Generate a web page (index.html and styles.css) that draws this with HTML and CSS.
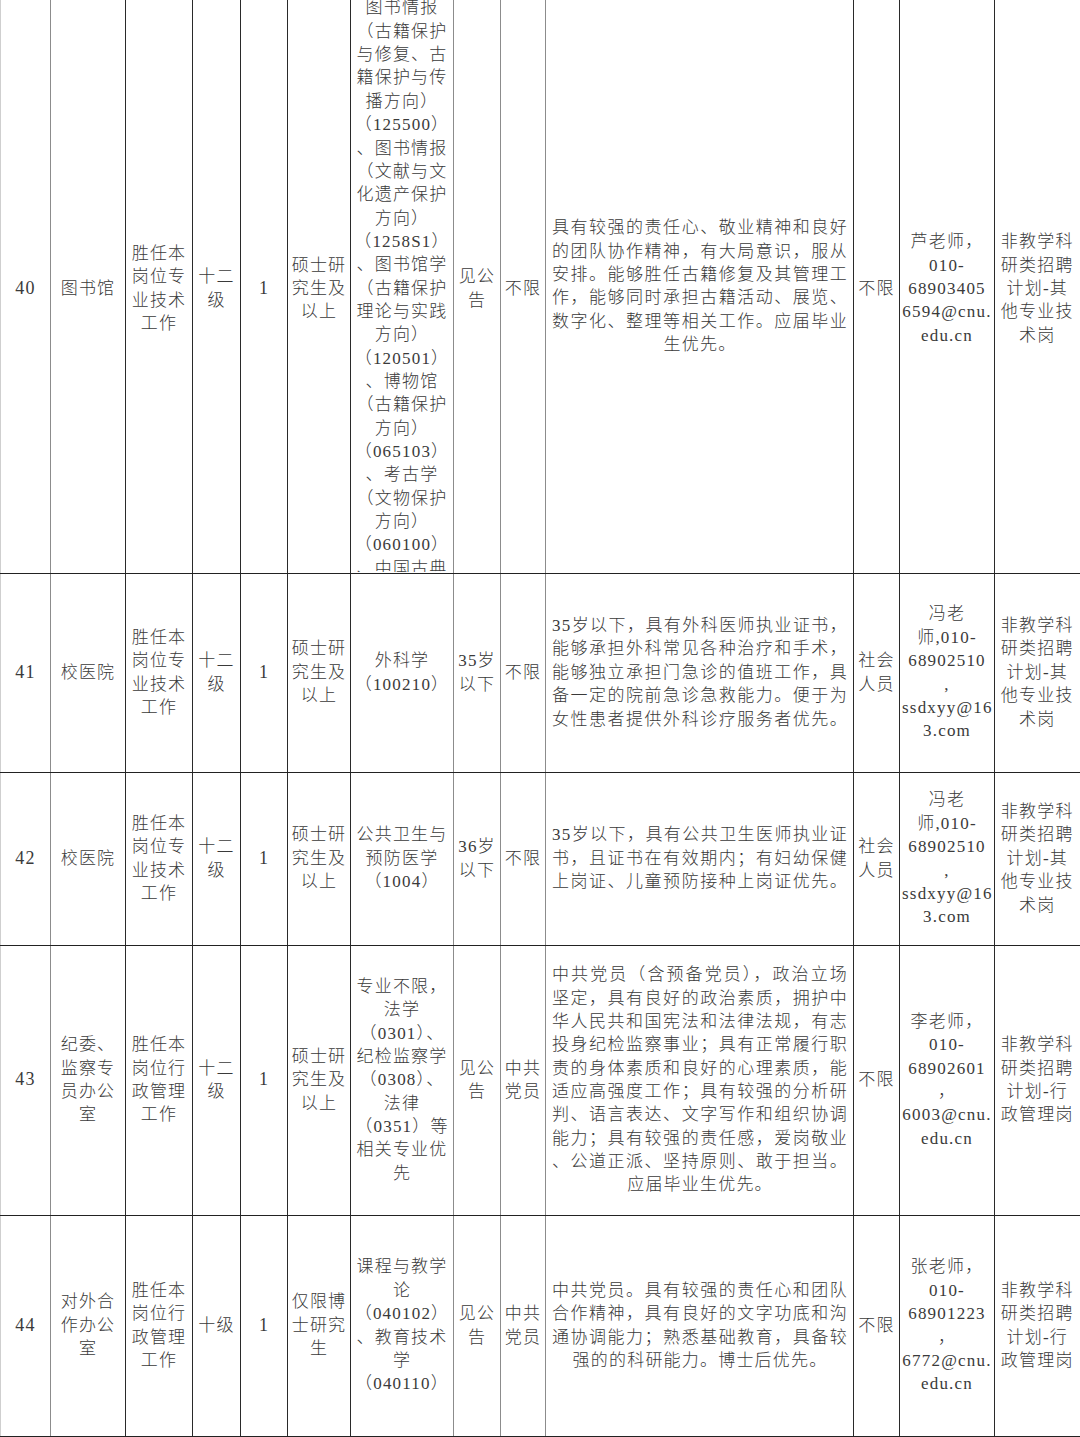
FILE: index.html
```html
<!DOCTYPE html>
<html lang="zh-CN">
<head>
<meta charset="utf-8">
<title>招聘计划</title>
<link rel="stylesheet" href="styles.css">
</head>
<body>
<table class="sheet">
  <colgroup>
    <col class="w-no"><col class="w-dept"><col class="w-post"><col class="w-level"><col class="w-num"><col class="w-edu"><col class="w-major"><col class="w-age"><col class="w-pol"><col class="w-desc"><col class="w-other"><col class="w-contact"><col class="w-type">
  </colgroup>
  <tbody>
    <tr class="r40">
      <td class="no">40</td>
      <td class="dept">图书馆</td>
      <td class="post">胜任本<br>岗位专<br>业技术<br>工作</td>
      <td class="level">十二<br>级</td>
      <td class="num">1</td>
      <td class="edu">硕士研<br>究生及<br>以上</td>
      <td class="major"><div class="clip"><div>图书情报<br>（古籍保护<br>与修复、古<br>籍保护与传<br>播方向）<br>（125500）<br>、图书情报<br>（文献与文<br>化遗产保护<br>方向）<br>（1258S1）<br>、图书馆学<br>（古籍保护<br>理论与实践<br>方向）<br>（120501）<br>、博物馆<br>（古籍保护<br>方向）<br>（065103）<br>、考古学<br>（文物保护<br>方向）<br>（060100）<br>、中国古典</div></div></td>
      <td class="age">见公<br>告</td>
      <td class="pol">不限</td>
      <td class="desc"><div class="just">具有较强的责任心、敬业精神和良好<br>的团队协作精神，有大局意识，服从<br>安排。能够胜任古籍修复及其管理工<br>作，能够同时承担古籍活动、展览、<br>数字化、整理等相关工作。应届毕业</div><div class="tail">生优先。</div></td>
      <td class="other">不限</td>
      <td class="contact">芦老师，<br>010-<br>68903405<br>6594@cnu.<br>edu.cn</td>
      <td class="type">非教学科<br>研类招聘<br>计划-其<br>他专业技<br>术岗</td>
    </tr>
    <tr class="r41">
      <td class="no">41</td>
      <td class="dept">校医院</td>
      <td class="post">胜任本<br>岗位专<br>业技术<br>工作</td>
      <td class="level">十二<br>级</td>
      <td class="num">1</td>
      <td class="edu">硕士研<br>究生及<br>以上</td>
      <td class="major">外科学<br>（100210）</td>
      <td class="age">35岁<br>以下</td>
      <td class="pol">不限</td>
      <td class="desc"><div class="just">35岁以下，具有外科医师执业证书，<br>能够承担外科常见各种治疗和手术，<br>能够独立承担门急诊的值班工作，具<br>备一定的院前急诊急救能力。便于为<br>女性患者提供外科诊疗服务者优先。</div></td>
      <td class="other">社会<br>人员</td>
      <td class="contact">冯老<br>师,010-<br>68902510<br>,<br>ssdxyy@16<br>3.com</td>
      <td class="type">非教学科<br>研类招聘<br>计划-其<br>他专业技<br>术岗</td>
    </tr>
    <tr class="r42">
      <td class="no">42</td>
      <td class="dept">校医院</td>
      <td class="post">胜任本<br>岗位专<br>业技术<br>工作</td>
      <td class="level">十二<br>级</td>
      <td class="num">1</td>
      <td class="edu">硕士研<br>究生及<br>以上</td>
      <td class="major">公共卫生与<br>预防医学<br>（1004）</td>
      <td class="age">36岁<br>以下</td>
      <td class="pol">不限</td>
      <td class="desc"><div class="just">35岁以下，具有公共卫生医师执业证<br>书，且证书在有效期内；有妇幼保健<br>上岗证、儿童预防接种上岗证优先。</div></td>
      <td class="other">社会<br>人员</td>
      <td class="contact">冯老<br>师,010-<br>68902510<br>,<br>ssdxyy@16<br>3.com</td>
      <td class="type">非教学科<br>研类招聘<br>计划-其<br>他专业技<br>术岗</td>
    </tr>
    <tr class="r43">
      <td class="no">43</td>
      <td class="dept">纪委、<br>监察专<br>员办公<br>室</td>
      <td class="post">胜任本<br>岗位行<br>政管理<br>工作</td>
      <td class="level">十二<br>级</td>
      <td class="num">1</td>
      <td class="edu">硕士研<br>究生及<br>以上</td>
      <td class="major">专业不限，<br>法学<br>（0301）、<br>纪检监察学<br>（0308）、<br>法律<br>（0351）等<br>相关专业优<br>先</td>
      <td class="age">见公<br>告</td>
      <td class="pol">中共<br>党员</td>
      <td class="desc"><div class="just">中共党员（含预备党员），政治立场<br>坚定，具有良好的政治素质，拥护中<br>华人民共和国宪法和法律法规，有志<br>投身纪检监察事业；具有正常履行职<br>责的身体素质和良好的心理素质，能<br>适应高强度工作；具有较强的分析研<br>判、语言表达、文字写作和组织协调<br>能力；具有较强的责任感，爱岗敬业<br>、公道正派、坚持原则、敢于担当。</div><div class="tail">应届毕业生优先。</div></td>
      <td class="other">不限</td>
      <td class="contact">李老师，<br>010-<br>68902601<br>，<br>6003@cnu.<br>edu.cn</td>
      <td class="type">非教学科<br>研类招聘<br>计划-行<br>政管理岗</td>
    </tr>
    <tr class="r44">
      <td class="no">44</td>
      <td class="dept">对外合<br>作办公<br>室</td>
      <td class="post">胜任本<br>岗位行<br>政管理<br>工作</td>
      <td class="level">十级</td>
      <td class="num">1</td>
      <td class="edu">仅限博<br>士研究<br>生</td>
      <td class="major">课程与教学<br>论<br>（040102）<br>、教育技术<br>学<br>（040110）</td>
      <td class="age">见公<br>告</td>
      <td class="pol">中共<br>党员</td>
      <td class="desc"><div class="just">中共党员。具有较强的责任心和团队<br>合作精神，具有良好的文字功底和沟<br>通协调能力；熟悉基础教育，具备较</div><div class="tail">强的的科研能力。博士后优先。</div></td>
      <td class="other">不限</td>
      <td class="contact">张老师，<br>010-<br>68901223<br>，<br>6772@cnu.<br>edu.cn</td>
      <td class="type">非教学科<br>研类招聘<br>计划-行<br>政管理岗</td>
    </tr>
  </tbody>
</table>
</body>
</html>
```

FILE: styles.css
```css
* {
  box-sizing: border-box;
}

html,
body {
  margin: 0;
  padding: 0;
  background: #ffffff;
}

body {
  font-family: "Liberation Serif", "Noto Sans CJK SC", serif;
  font-size: 17px;
  font-weight: 300;
  line-height: 23.35px;
  letter-spacing: 1.2px;
  color: #3a3a3a;
}

.sheet {
  border-collapse: collapse;
  table-layout: fixed;
  width: 1080px;
  border-left: 1px solid #cfcfcf;
}

.w-no { width: 50px; }
.w-dept { width: 75px; }
.w-post { width: 67px; }
.w-level { width: 48px; }
.w-num { width: 47px; }
.w-edu { width: 63px; }
.w-major { width: 103px; }
.w-age { width: 47px; }
.w-pol { width: 45px; }
.w-desc { width: 308px; }
.w-other { width: 46px; }
.w-contact { width: 95px; }
.w-type { width: 86px; }

.sheet td {
  padding: 0 2px;
  vertical-align: middle;
  text-align: center;
  white-space: nowrap;
  border: 0;
  border-right: 1px solid #2a2a2a;
  border-bottom: 1px solid #222222;
  overflow: hidden;
}

.sheet td.no,
.sheet td.major,
.sheet td.age,
.sheet td.pol {
  border-right-color: #8c8c8c;
}

.sheet td.type {
  border-right: 2px solid #333333;
}

.sheet td.no,
.sheet td.num {
  font-size: 18px;
}

.r40 { height: 573px; }
.r41 { height: 199px; }
.r42 { height: 173px; }
.r43 { height: 270px; }
.r44 { height: 221px; }

.r40 td {
  padding-top: 5px;
}

.r40 td.major {
  padding: 0;
}

.clip {
  height: 572px;
  overflow: hidden;
  display: flex;
  flex-direction: column;
  justify-content: center;
  padding-top: 4px;
}

.sheet td.desc {
  white-space: normal;
  text-align: left;
  padding: 0 5px 0 6px;
}

.just {
  text-align: justify;
  text-align-last: justify;
}

.tail {
  text-align: center;
}
```
